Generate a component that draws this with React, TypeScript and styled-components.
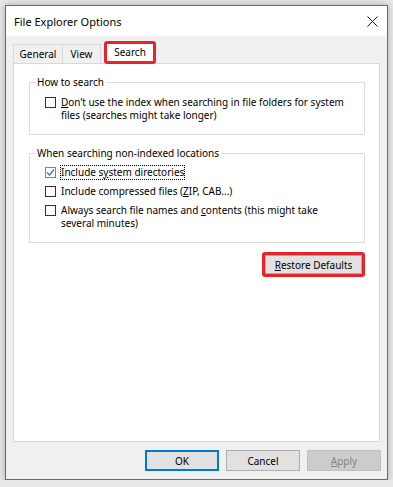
import React from 'react';
import styled, { createGlobalStyle } from 'styled-components';

const GlobalStyle = createGlobalStyle`
  html, body {
    margin: 0;
    padding: 0;
    background: #e8e8e8;
  }
  body {
    font-family: "Noto Sans", "Liberation Sans", sans-serif;
    font-size: 10px;
    color: #000;
  }
`;

const Window = styled.div`
  margin: 5px 0 0 5px;
  width: 383px;
  height: 475px;
  box-sizing: border-box;
  border: 1px solid #6a6a6a;
  background: #f0f0f0;
  box-shadow: 0 0 7px rgba(0, 0, 0, 0.28);
  display: flex;
  flex-direction: column;
`;

const TitleBar = styled.div`
  height: 30px;
  flex: none;
  background: #fff;
  display: flex;
  align-items: center;
  justify-content: space-between;
  padding: 0 9px 0 8px;
`;

const Title = styled.span`
  font-size: 11px;
`;

const Body = styled.div`
  flex: 1;
  display: flex;
  flex-direction: column;
  padding: 0 7px;
`;

const TabStrip = styled.div`
  height: 27px;
  display: flex;
  align-items: flex-end;
  padding-left: 1px;
`;

const Tab = styled.div<{ $w: number }>`
  height: 19px;
  box-sizing: border-box;
  padding: 0 5px;
  border: 1px solid #d9d9d9;
  border-bottom: none;
  margin-left: -1px;
  display: flex;
  align-items: center;
  justify-content: center;
  width: ${p => p.$w}px;
`;

// selected tab, drawn with the red highlight round it
const ActiveTab = styled.div`
  height: 23px;
  width: 52px;
  box-sizing: border-box;
  margin: 0 0 -1px 3px;
  background: #fff;
  border: 3px solid #e5242b;
  border-radius: 3px;
  display: flex;
  align-items: center;
  justify-content: center;
  padding-bottom: 1px;
  position: relative;
  z-index: 1;
`;

const Panel = styled.div`
  height: 379px;
  box-sizing: border-box;
  background: #fff;
  border: 1px solid #d9d9d9;
  padding: 0 14px 0 15px;
  display: flex;
  flex-direction: column;
`;

const Group = styled.fieldset<{ $top: number; $pt: number }>`
  margin: ${p => p.$top}px 0 0 0;
  border: 1px solid #dcdcdc;
  padding: ${p => p.$pt}px 10px 12px 5px;
  min-width: 0;
`;

const Legend = styled.legend`
  padding: 0 2px;
  line-height: 14px;
`;

const CheckList = styled.div<{ $gap: number }>`
  display: flex;
  flex-direction: column;
  gap: ${p => p.$gap}px;
  padding-left: 10px;
`;

const Row = styled.div`
  display: flex;
  align-items: flex-start;
  gap: 5px;
  line-height: 13px;
`;

const Box = styled.span<{ $checked?: boolean }>`
  flex: none;
  width: 11px;
  height: 11px;
  box-sizing: border-box;
  margin-top: 1px;
  border: 1px solid ${p => (p.$checked ? '#4d8fd1' : '#333')};
  background: #fff;
  display: flex;
  align-items: center;
  justify-content: center;
`;

const Label = styled.span<{ $focus?: boolean }>`
  outline: ${p => (p.$focus ? '1px dotted #000' : 'none')};
  outline-offset: 0;
`;

const RestoreRow = styled.div`
  margin-top: 9px;
  display: flex;
  justify-content: flex-end;
`;

const Annotation = styled.div`
  border: 3px solid #e5242b;
  border-radius: 3px;
  display: flex;
`;

const WinButton = styled.div<{ $w: number; $h: number; $default?: boolean; $disabled?: boolean }>`
  height: ${p => p.$h}px;
  width: ${p => p.$w}px;
  box-sizing: border-box;
  display: flex;
  align-items: center;
  justify-content: center;
  background: ${p => (p.$disabled ? '#cccccc' : '#e1e1e1')};
  border: ${p =>
    p.$default ? '2px solid #0078d7' : p.$disabled ? '1px solid #bfbfbf' : '1px solid #adadad'};
  color: ${p => (p.$disabled ? '#838383' : '#000')};
`;

const ButtonRow = styled.div`
  display: flex;
  justify-content: flex-end;
  gap: 7px;
  padding: 8px 0 8px;
  margin-right: -1px;
`;

const CloseIcon = () => (
  <svg width="11" height="11" viewBox="0 0 11 11">
    <path d="M0.5 0.5 L10.5 10.5 M10.5 0.5 L0.5 10.5" stroke="#1a1a1a" strokeWidth="1" fill="none" />
  </svg>
);

const Check = () => (
  <svg width="9" height="9" viewBox="0 0 9 9">
    <path d="M1 4.5 L3.5 7 L8 1.5" stroke="#2f6fc2" strokeWidth="1.2" fill="none" />
  </svg>
);

export default function App() {
  return (
    <>
      <GlobalStyle />
      <Window>
        <TitleBar>
          <Title>File Explorer Options</Title>
          <CloseIcon />
        </TitleBar>
        <Body>
          <TabStrip>
            <Tab $w={50}>General</Tab>
            <Tab $w={39}>View</Tab>
            <ActiveTab>Search</ActiveTab>
          </TabStrip>
          <Panel>
            <Group $top={11} $pt={7}>
              <Legend>How to search</Legend>
              <CheckList $gap={0}>
                <Row>
                  <Box />
                  <Label>
                    <u>D</u>on’t use the index when searching in file folders for system
                    <br />
                    files (searches might take longer)
                  </Label>
                </Row>
              </CheckList>
            </Group>
            <Group $top={11} $pt={6}>
              <Legend>When searching non-indexed locations</Legend>
              <CheckList $gap={6}>
                <Row>
                  <Box $checked>
                    <Check />
                  </Box>
                  <Label $focus>
                    Include s<u>y</u>stem directories
                  </Label>
                </Row>
                <Row>
                  <Box />
                  <Label>
                    Include compressed files (<u>Z</u>IP, CAB...)
                  </Label>
                </Row>
                <Row>
                  <Box />
                  <Label>
                    Always search file names and <u>c</u>ontents (this might take
                    <br />
                    several minutes)
                  </Label>
                </Row>
              </CheckList>
            </Group>
            <RestoreRow>
              <Annotation>
                <WinButton $w={97} $h={19}>
                  <span>
                    <u>R</u>estore Defaults
                  </span>
                </WinButton>
              </Annotation>
            </RestoreRow>
          </Panel>
          <ButtonRow>
            <WinButton $w={74} $h={21} $default>
              OK
            </WinButton>
            <WinButton $w={74} $h={21}>
              Cancel
            </WinButton>
            <WinButton $w={74} $h={21} $disabled>
              <span>
                <u>A</u>pply
              </span>
            </WinButton>
          </ButtonRow>
        </Body>
      </Window>
    </>
  );
}
